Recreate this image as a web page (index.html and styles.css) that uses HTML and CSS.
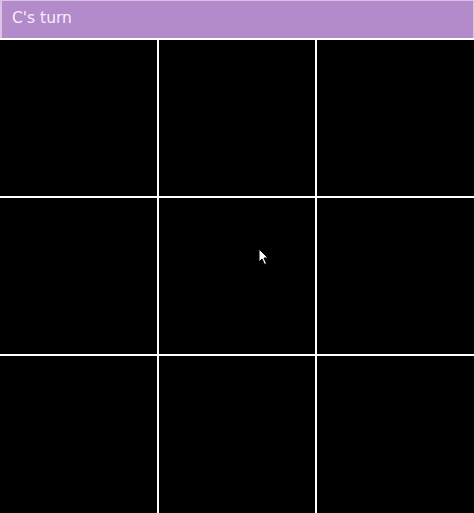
FILE: index.html
```html
<!DOCTYPE html>
<html>
<head>
<meta charset="utf-8">
<link rel="stylesheet" href="styles.css">
</head>
<body>
<div class="app">
  <header class="status">C's turn</header>
  <div class="board">
    <div class="cell"></div><div class="cell"></div><div class="cell"></div>
    <div class="cell"></div><div class="cell center"><svg class="cursor" width="12" height="18" viewBox="0 0 12 18"><path d="M1 1 L1 14 L4 11 L6.5 16.5 L8.5 15.5 L6 10 L10 10 Z" fill="#fff" stroke="#000" stroke-width="1"/></svg></div><div class="cell"></div>
    <div class="cell"></div><div class="cell"></div><div class="cell"></div>
  </div>
</div>
</body>
</html>
```
FILE: styles.css
```css
html, body { margin: 0; padding: 0; background: #000; }
.app { width: 474px; height: 513px; display: flex; flex-direction: column; overflow: hidden; }
.status {
  box-sizing: border-box;
  height: 38px;
  background: #b38bcb;
  border-top: 1px solid #d9c4e6;
  border-left: 2px solid #d9c4e6;
  border-right: 1px solid #d9c4e6;
  color: #f6f0fa;
  font-family: "DejaVu Sans", sans-serif;
  font-size: 15.5px;
  padding: 8px 0 0 10px;
}
.board {
  flex: 1;
  background: #fff;
  padding-top: 2px;
  display: grid;
  grid-template-columns: 157px 156px 157px;
  grid-template-rows: 156px 156px 157px;
  column-gap: 2px;
  row-gap: 2px;
}
.cell { background: #000; }
.center { position: relative; }
.cursor { position: absolute; left: 99px; top: 50px; }
```
